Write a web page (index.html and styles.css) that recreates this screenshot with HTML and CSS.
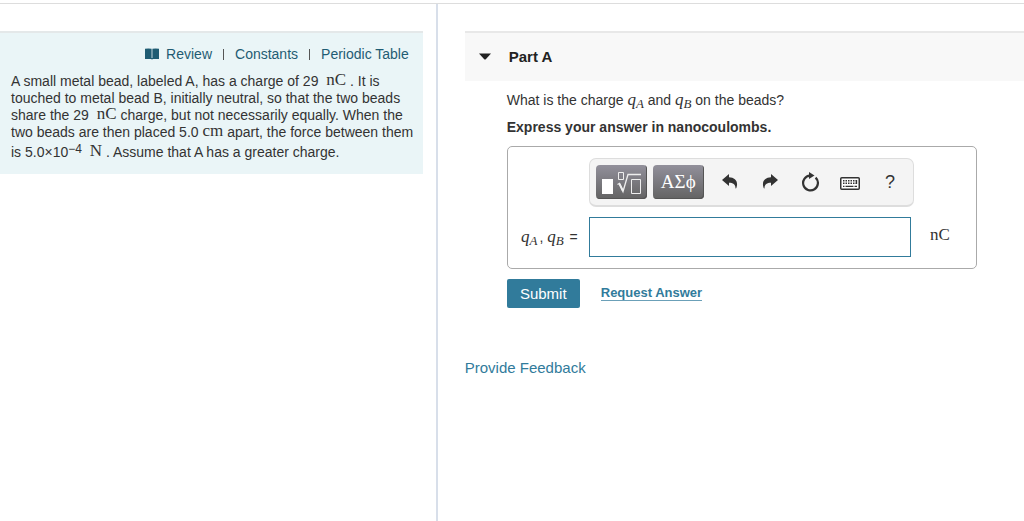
FILE: index.html
```
<!DOCTYPE html>
<html lang="en">
<head>
<meta charset="utf-8">
<meta name="viewport" content="width=device-width, initial-scale=1">
<title>Part A</title>
<link rel="stylesheet" href="styles.css">
</head>
<body>
<div class="page">
  <aside class="side">
    <section class="intro">
      <nav class="resources">
        <a class="review" href="#review"><svg class="book" viewBox="0 0 14 12" width="14" height="12" aria-hidden="true"><path fill="currentColor" d="M0 .8Q3.500 0 6.600.8v9.700H0zM14 .8Q10.500 0 7.400.8v9.700H14z"/><path fill="currentColor" d="M0 10h14v1H8l-1 .5-1-.5H0z"/></svg>Review</a>
        <span class="bar"></span>
        <a href="#constants">Constants</a>
        <span class="bar"></span>
        <a href="#table">Periodic Table</a>
      </nav>
      <p class="problem">A small metal bead, labeled A, has a charge of 29 <span class="unit spaced">nC</span> . It is<br>touched to metal bead B, initially neutral, so that the two beads<br>share the 29 <span class="unit spaced">nC</span> charge, but not necessarily equally. When the<br>two beads are then placed 5.0 <span class="unit">cm</span> apart, the force between them</p>
      <p class="problem last">is 5.0×10<sup>−4</sup> <span class="unit spaced">N</span> . Assume that A has a greater charge.</p>
    </section>
  </aside>
  <main class="main">
    <h2 class="part"><svg viewBox="0 0 12 7" width="12" height="7" aria-hidden="true"><path fill="#222" d="M0 .5h12L7 6q-1 1-2 0z"/></svg>Part A</h2>
    <div class="content">
      <p class="question">What is the charge <span class="var">q<sub>A</sub></span> and <span class="var">q<sub>B</sub></span> on the beads?</p>
      <p class="instruction">Express your answer in nanocoulombs.</p>
      <form class="answer-form">
        <div class="answer">
          <div class="toolbar">
            <button type="button" class="palette" aria-label="Templates"><svg viewBox="0 0 40 24" width="40" height="24"><path fill="#fff" d="M1 9h11v15H1z"/><g fill="none" stroke="#eee"><path d="M17.500 2.500h5v7h-5zM30.500 9.500h9v14h-9z"/><path stroke-width="1.300" d="M16.500 14.500l2-1 3.500 8L27 4.500h13"/><path stroke-width="2" d="M18.500 14l3.500 7"/></g></svg></button>
            <button type="button" class="palette symbols">ΑΣϕ</button>
            <button type="button" class="tool" aria-label="Undo"><svg viewBox="0 0 16 18" width="16" height="18"><path fill="#333" d="M0 7L7 1v3.300c6 .2 9.500 4 7.500 10.200-.3 1-1 1.500-1 .5C13.500 11.500 11 9.800 7 9.800V13z"/></svg></button>
            <button type="button" class="tool" aria-label="Redo"><svg viewBox="0 0 16 18" width="16" height="18"><path fill="#333" d="M16 7L9 1v3.300c-6 .2-9.500 4-7.500 10.200.3 1 1 1.500 1 .5C2.500 11.500 5 9.800 9 9.800V13z"/></svg></button>
            <button type="button" class="tool" aria-label="Reset"><svg viewBox="0 0 18 20" width="18" height="20"><path fill="none" stroke="#333" stroke-width="2.200" d="M14.600 5.600A7.400 7.400 0 1 1 9 3.600"/><path fill="#333" d="M8 0l5.500 3.400L8 7z"/></svg></button>
            <button type="button" class="tool" aria-label="Keyboard"><svg class="keyboard" viewBox="0 0 20 13" width="20" height="13"><rect x=".75" y=".75" width="18.500" height="11.500" rx="1" fill="#fff" stroke="#333" stroke-width="1.500"/><path fill="none" stroke="#333" stroke-width="1.400" stroke-dasharray="1.500 1" d="M3 3.700h14M3 6.300h14"/><path fill="none" stroke="#333" stroke-width="1.300" d="M3 9.300h1.500M5.500 9.300h8M14.500 9.300H17M16.500 3v4"/></svg></button>
            <button type="button" class="tool help" aria-label="Help">?</button>
          </div>
          <label class="label" for="answer"><span class="var">q<sub>A</sub></span>, <span class="var">q<sub>B</sub></span> =</label>
          <input class="field" id="answer" type="text">
          <span class="unit result">nC</span>
        </div>
        <div class="actions">
          <button type="button" class="submit">Submit</button>
          <a class="request" href="#request">Request Answer</a>
        </div>
      </form>
    </div>
    <a class="feedback" href="#feedback">Provide Feedback</a>
  </main>
</div>
</body>
</html>
```
FILE: styles.css
```
* { box-sizing: border-box; }
body {
  margin: 0;
  padding-top: 3px;
  background: #fff;
  color: #333;
  font: 14px/17px "Liberation Sans", Arial, sans-serif;
}
p, h2 { margin: 0; }
button { font: inherit; border: 0; padding: 0; cursor: pointer; }
a { color: #1f5c73; text-decoration: none; }
svg { display: block; flex: none; }
.page {
  display: grid;
  grid-template-columns: 42.75% minmax(0, 1fr);
  min-height: calc(100vh - 3px);
  border-top: 1px solid #ddd;
}
.side {
  border-right: 2px solid #d8dfea;
  padding: 27px 13px 0 0;
}
.intro {
  background: #eaf5f7;
  border-top: 2px solid #e4e8e9;
  padding: 13px 14px 11px 11px;
}
.resources {
  display: flex;
  justify-content: flex-end;
  align-items: center;
  gap: 11px;
  margin-bottom: 10px;
}
.review { display: flex; align-items: center; gap: 7px; }
.book { margin-bottom: 2px; }
.bar { width: 1px; height: 11px; background: #555; }
.problem { white-space: nowrap; }
.last { line-height: 22px; }
.unit {
  font-family: "Liberation Serif", "Times New Roman", serif;
  font-size: 17px;
  line-height: 1px;
}
.problem .unit { vertical-align: 1px; }
.spaced { margin-left: 4px; }
sup { font-size: 12px; line-height: 1px; vertical-align: 4px; }
.main { padding: 27px 0 0 27px; }
.part {
  display: flex;
  align-items: center;
  gap: 18px;
  height: 50px;
  padding: 0 14px 2px;
  border-top: 2px solid #e8e8e8;
  background: #f8f8f8;
  color: #222;
  font-size: 15px;
}
.content { padding: 11px 47px 0 42px; }
.var {
  font-family: "Liberation Serif", "Times New Roman", serif;
  font-style: italic;
  font-size: 17px;
  line-height: 1px;
}
sub { font-size: 13px; line-height: 1px; vertical-align: -3px; }
.instruction { margin-top: 10px; font-weight: bold; }
.answer {
  display: grid;
  grid-template-columns: 70px minmax(0, 1fr) 54px;
  column-gap: 11px;
  row-gap: 10px;
  align-items: center;
  margin-top: 10px;
  padding: 11px 0;
  border: 1px solid #aaa;
  border-radius: 5px;
}
.toolbar {
  grid-column: 2;
  display: flex;
  align-items: center;
  height: 49px;
  margin-right: -3px;
  padding: 0 3px 0 6px;
  border: 1px solid #ddd;
  border-bottom-width: 2px;
  border-radius: 7px;
  background: #f4f4f4;
}
.palette {
  display: flex;
  align-items: center;
  justify-content: center;
  flex: none;
  width: 51px;
  height: 34px;
  margin-right: 6px;
  border-radius: 4px;
  background: linear-gradient(#92909b, #636363);
  box-shadow: inset -1px -1px #555;
  color: #fff;
}
.symbols { font: 19px/24px "Liberation Serif", serif; }
.tool {
  display: flex;
  align-items: center;
  justify-content: center;
  flex: 1 1 40px;
  height: 34px;
  background: none;
  color: #333;
}
.help { font-size: 18px; }
.keyboard { margin-top: 3px; }
.label { grid-column: 1; text-align: right; white-space: nowrap; }
.label .var { margin-right: 2px; }
.field {
  width: 100%;
  height: 40px;
  padding: 0 8px;
  border: 1px solid #317b9b;
  background: #fff;
  font: inherit;
}
.result { padding: 0 0 5px 8px; }
.actions {
  display: flex;
  align-items: center;
  gap: 21px;
  margin-top: 10px;
}
.submit {
  width: 73px;
  height: 29px;
  border-radius: 2px;
  background: #317b9b;
  color: #fff;
  font-size: 15px;
}
.request {
  border-bottom: 1px solid #6ba0b8;
  color: #317b9b;
  font-size: 13px;
  font-weight: bold;
  line-height: 14px;
}
.feedback {
  display: inline-block;
  margin-top: 51px;
  color: #317b9b;
  font-size: 15px;
}
```
